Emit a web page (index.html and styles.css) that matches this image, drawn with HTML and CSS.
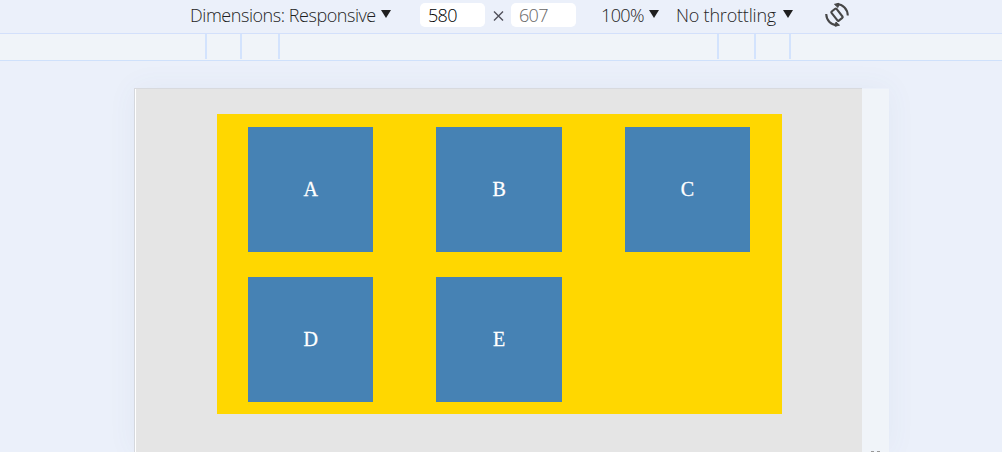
FILE: index.html
```html
<!DOCTYPE html>
<html lang="en">

<head>
	<meta charset="UTF-8">
	<meta name="viewport" content="width=device-width, initial-scale=1.0">
	<title>Document</title>
	<link rel="stylesheet" href="styles.css">
</head>

<body>
	<div class="toolbar">
		<span class="toolbar__select toolbar__device"><span class="toolbar__text">Dimensions: Responsive</span><i class="arrow"></i></span>
		<span class="toolbar__size">580</span>
		<span class="toolbar__times">
			<svg width="11" height="10" viewBox="0 0 11 10"><path d="M1 .5L10 9.5M10 .5L1 9.5" stroke="#50505a" stroke-width="1.4" fill="none"/></svg>
		</span>
		<span class="toolbar__size toolbar__size--muted">607</span>
		<span class="toolbar__select toolbar__zoom"><span class="toolbar__text">100%</span><i class="arrow"></i></span>
		<span class="toolbar__select toolbar__throttling"><span class="toolbar__text">No throttling</span><i class="arrow"></i></span>
		<svg class="toolbar__rotate" width="24" height="26" viewBox="0 0 24 26" fill="none" stroke="#474747" stroke-width="2.1">
			<rect x="8.800" y="6.900" width="6.400" height="11.600" rx="1" transform="rotate(-38 12 12.700)"/>
			<path d="M12 2.300C18 2.300 22.500 7 22.800 13.500M12 23.200C6 23.200 1.500 18.500 1.200 12"/>
			<path d="M9.500 2.300L14 1.300L13 5.500zM14.500 23.200L10 24.200L11 20z" fill="#474747" stroke-width="1"/>
		</svg>
	</div>
	<div class="ruler">
		<i></i><i></i><i></i><i></i><i></i><i></i>
	</div>
	<div class="viewport">
		<div class="page">
			<div class="container">
				<div class="box">A</div>
				<div class="box">B</div>
				<div class="box">C</div>
				<div class="box">D</div>
				<div class="box">E</div>
			</div>
		</div>
		<div class="resizer"><i></i><i></i></div>
	</div>
</body>

</html>
```
FILE: styles.css
```css
* {
	box-sizing: border-box;
}

body {
	margin: 0;
	height: 452px;
	overflow: hidden;
	background: #ebf0fa;
	font-family: "Open Sans", "Noto Sans", sans-serif;
	font-size: 18px;
	font-weight: 340;
	color: #1f1f1f;
}

.toolbar {
	display: flex;
	align-items: center;
	height: 33px;
	padding: 0 0 4px 190px;
	line-height: 24px;
	white-space: nowrap;
}

.toolbar__select {
	display: flex;
	align-items: center;
	justify-content: space-between;
}

.toolbar__device {
	width: 201px;
	margin-right: 29px;
	letter-spacing: -0.45px;
}

.toolbar__zoom {
	width: 58px;
	margin: 0 17px 0 25px;
	letter-spacing: -0.6px;
}

.toolbar__throttling {
	width: 117px;
	margin-right: 32px;
	letter-spacing: -0.2px;
}

.arrow {
	border: solid transparent;
	border-width: 8px 5.5px 0;
	border-top-color: #1f1f1f;
	margin-bottom: 1px;
}

.toolbar__size {
	width: 65px;
	height: 24px;
	padding-left: 8px;
	border-radius: 5px;
	background: #fff;
	color: #000;
	letter-spacing: -0.7px;
}

.toolbar__size--muted {
	color: #666;
}

.toolbar__times {
	display: flex;
	justify-content: center;
	width: 26px;
	padding-top: 3px;
}

.ruler {
	display: flex;
	height: 28px;
	padding-left: 205px;
	border-top: 1px solid #d3e0fb;
	border-bottom: 1px solid #cfe1fb;
	background: #f0f4f9;
}

.ruler i {
	width: 2px;
	height: 25px;
	margin-right: 33px;
	background: #d3e3fd;
}

.ruler i:nth-child(2) {
	margin-right: 36px;
}

.ruler i:nth-child(3) {
	margin-right: 437px;
}

.ruler i:nth-child(4) {
	margin-right: 35px;
}

.viewport {
	display: flex;
	width: 755px;
	height: 364px;
	margin: 27px 0 0 134px;
	box-shadow: 0 0 28px rgba(70, 110, 150, 0.06);
}

.page {
	width: 728px;
	padding: 25px 80px 0 81px;
	border-top: 1px solid #d8dade;
	border-left: 1px solid #d5d8dd;
	background: #e5e5e5;
	box-shadow: inset 1px 0 #fff;
}

.container {
	display: grid;
	grid-template-columns: repeat(3, 125.4px);
	grid-template-rows: 150px 150px;
	column-gap: 63px;
	align-items: center;
	width: 565px;
	margin-left: 1px;
	padding-left: 31px;
	background: gold;
}

.box {
	display: flex;
	align-items: center;
	justify-content: center;
	height: 125px;
	background: steelblue;
	color: #fff;
	font-family: "Liberation Serif", serif;
	font-size: 20px;
	font-weight: 400;
	-webkit-text-stroke: 0.3px #fff;
}

.resizer {
	display: flex;
	align-items: flex-end;
	justify-content: center;
	gap: 3px;
	width: 27px;
	margin-top: 1px;
	background: #f0f4f9;
}

.resizer i {
	width: 3px;
	height: 1px;
	background: #999;
}
```
